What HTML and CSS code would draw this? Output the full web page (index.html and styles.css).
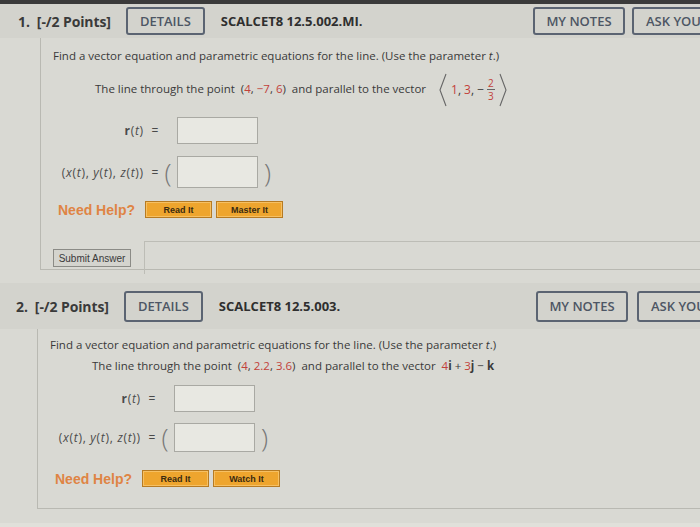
FILE: index.html
```html
<!DOCTYPE html>
<html>
<head>
<meta charset="utf-8">
<link rel="stylesheet" href="styles.css">
</head>
<body>
<div class="topbar"></div>

<div class="qhead q1">
  <div class="qleft">
    <span class="qnum">1.&nbsp; [-/2 Points]</span>
    <span class="obtn details">DETAILS</span>
    <span class="qcode">SCALCET8 12.5.002.MI.</span>
  </div>
  <span class="obtn notes">MY NOTES</span>
  <span class="obtn ask">ASK YOUR TEACHER</span>
</div>

<div class="panel p1">
  <p class="prompt">Find a vector equation and parametric equations for the line. (Use the parameter <i>t</i>.)</p>
  <p class="given">The line through the point&nbsp; (<span class="red">4</span>, <span class="red">&minus;7</span>, <span class="red">6</span>)&nbsp; and parallel to the vector <span class="vec"><svg class="ang" width="10" height="34" viewBox="0 0 10 34"><polyline points="8,1 2,17 8,33" fill="none" stroke="#666" stroke-width="1.1"/></svg><span class="red">1</span>,&nbsp;<span class="red">3</span>,&nbsp;&minus;<span class="frac"><span class="red num">2</span><span class="red den">3</span></span><svg class="ang" width="10" height="34" viewBox="0 0 10 34"><polyline points="2,1 8,17 2,33" fill="none" stroke="#666" stroke-width="1.1"/></svg></span></p>
  <div class="ans r1">
    <span class="lab"><b>r</b>(<i>t</i>)&nbsp; =</span>
    <span class="paren"></span>
    <span class="box"></span>
  </div>
  <div class="ans r2">
    <span class="lab">(<i>x</i>(<i>t</i>), <i>y</i>(<i>t</i>), <i>z</i>(<i>t</i>))&nbsp; =</span>
    <span class="paren">(</span>
    <span class="box"></span>
    <span class="paren close">)</span>
  </div>
  <div class="help">
    <span class="need">Need Help?</span>
    <span class="hbtn">Read It</span>
    <span class="hbtn">Master It</span>
  </div>
  <div class="submitrow">
    <span class="submit">Submit Answer</span>
    <div class="feedback"></div>
  </div>
</div>

<div class="qhead q2">
  <div class="qleft">
    <span class="qnum">2.&nbsp; [-/2 Points]</span>
    <span class="obtn details">DETAILS</span>
    <span class="qcode">SCALCET8 12.5.003.</span>
  </div>
  <span class="obtn notes">MY NOTES</span>
  <span class="obtn ask">ASK YOUR TEACHER</span>
</div>

<div class="panel p2">
  <p class="prompt">Find a vector equation and parametric equations for the line. (Use the parameter <i>t</i>.)</p>
  <p class="given g2">The line through the point&nbsp; (<span class="red">4</span>, <span class="red">2.2</span>, <span class="red">3.6</span>)&nbsp; and parallel to the vector&nbsp; <span class="red">4</span><b>i</b> + <span class="red">3</span><b>j</b> &minus; <b>k</b></p>
  <div class="ans r1">
    <span class="lab"><b>r</b>(<i>t</i>)&nbsp; =</span>
    <span class="paren"></span>
    <span class="box"></span>
  </div>
  <div class="ans r2">
    <span class="lab">(<i>x</i>(<i>t</i>), <i>y</i>(<i>t</i>), <i>z</i>(<i>t</i>))&nbsp; =</span>
    <span class="paren">(</span>
    <span class="box"></span>
    <span class="paren close">)</span>
  </div>
  <div class="help">
    <span class="need">Need Help?</span>
    <span class="hbtn">Read It</span>
    <span class="hbtn">Watch It</span>
  </div>
</div>
<div class="bottom"></div>
</body>
</html>
```

FILE: styles.css
```css
html, body {
  margin: 0;
  padding: 0;
}
body {
  width: 700px;
  height: 527px;
  overflow: hidden;
  background: #d9d9d3;
  font-family: "Open Sans", "DejaVu Sans", sans-serif;
  color: #3d3d3d;
}
.topbar {
  height: 4px;
  background: #3a3a3a;
}
.qhead {
  display: flex;
  align-items: center;
  width: 820px;
  background: #d3d3cd;
  box-sizing: border-box;
}
.q1 {
  height: 34px;
  padding-left: 18px;
}
.q2 {
  height: 46px;
  margin-top: 13px;
  padding-left: 16px;
}
.qleft {
  display: flex;
  align-items: center;
  flex: 0 0 515px;
}
.q2 .qleft {
  flex-basis: 520px;
}
.qnum {
  font-size: 14px;
  font-weight: 700;
  color: #3a3a3a;
  letter-spacing: -0.1px;
}
.qcode {
  font-size: 13px;
  font-weight: 700;
  color: #2f2f2f;
  margin-left: 16px;
}
.obtn {
  display: inline-flex;
  align-items: center;
  justify-content: center;
  box-sizing: border-box;
  height: 28px;
  border: 2px solid #5b6472;
  border-radius: 3px;
  font-size: 13px;
  font-weight: 600;
  color: #4d5664;
}
.details {
  width: 79px;
  margin-left: 15px;
}
.q2 .obtn {
  height: 31px;
}
.notes {
  width: 92px;
}
.ask {
  width: 160px;
  margin-left: 7px;
  justify-content: flex-start;
  padding-left: 12px;
}
.q2 .ask {
  margin-left: 9px;
}
.panel {
  margin-left: 40px;
  border-left: 1px solid #b9b9b2;
  border-bottom: 1px solid #b9b9b2;
  padding-left: 12px;
  box-sizing: border-box;
}
.p1 {
  height: 232px;
  padding-top: 10px;
}
.p2 {
  margin-left: 37px;
  height: 180px;
  padding-top: 8px;
}
.prompt {
  margin: 0;
  font-size: 11.5px;
  line-height: 16px;
  color: #3a3a3a;
  white-space: nowrap;
}
.given {
  margin: 7px 0 0 0;
  padding-left: 42px;
  font-size: 11.5px;
  line-height: 36px;
  height: 36px;
  color: #3a3a3a;
  white-space: nowrap;
}
.g2 {
  height: 16px;
  line-height: 16px;
  margin-top: 5px;
}
.red {
  color: #c2413a;
}
.vec {
  display: inline-flex;
  align-items: center;
  vertical-align: middle;
  margin-left: 6px;
  line-height: 16px;
  font-size: 12px;
}
.ang {
  display: block;
  margin: 0 3px;
}
.frac {
  display: inline-flex;
  flex-direction: column;
  align-items: center;
  font-size: 10px;
  line-height: 12px;
  margin-left: 3px;
}
.frac .num {
  border-bottom: 1px solid #666;
  padding: 0 1px;
}
.ans {
  display: flex;
  align-items: center;
}
.lab {
  width: 106px;
  text-align: right;
  font-size: 12px;
  letter-spacing: 0.7px;
  color: #4a4a4a;
  white-space: nowrap;
}
.lab b {
  font-weight: 700;
}
.paren {
  display: inline-block;
  width: 18px;
  font-size: 26px;
  font-weight: 300;
  line-height: 30px;
  color: #777;
  text-align: center;
}
.close {
  width: auto;
  margin-left: 6px;
}
.box {
  display: block;
  width: 81px;
  height: 27px;
  box-sizing: border-box;
  background: #e8e8e2;
  border: 1px solid #a9a9a3;
}
.p1 .r1 {
  margin-top: 10px;
}
.p1 .r2 {
  margin-top: 12px;
}
.r2 .box {
  height: 32px;
}
.p2 .r1 {
  margin-top: 11px;
}
.p2 .r2 {
  margin-top: 10px;
}
.p2 .r2 .box {
  height: 29px;
}
.help {
  display: flex;
  align-items: center;
  margin-top: 13px;
  padding-left: 5px;
}
.p2 .help {
  margin-top: 18px;
}
.need {
  font-family: "Liberation Sans", Arial, sans-serif;
  font-weight: 700;
  font-size: 14px;
  color: #df8444;
  margin-right: 10px;
}
.hbtn {
  display: inline-flex;
  align-items: center;
  justify-content: center;
  box-sizing: border-box;
  width: 67px;
  height: 17px;
  margin-right: 4px;
  background: #eea52e;
  border: 1px solid #b77b22;
  box-shadow: inset 0 0 0 1px #f6c063;
  font-family: "Liberation Sans", Arial, sans-serif;
  font-weight: 700;
  font-size: 9px;
  color: #3a2a10;
}
.submitrow {
  display: flex;
  margin-top: 23px;
}
.submit {
  display: inline-flex;
  align-items: center;
  justify-content: center;
  box-sizing: border-box;
  width: 78px;
  height: 18px;
  margin-top: 8px;
  background: #d4d4ce;
  border: 1px solid #8b8b86;
  font-family: "Liberation Sans", Arial, sans-serif;
  font-size: 10px;
  color: #3a3a3a;
}
.feedback {
  flex: 1;
  height: 32px;
  margin-left: 13px;
  border-top: 1px solid #bdbdb6;
  border-left: 1px solid #bdbdb6;
}
.bottom {
  height: 20px;
  margin-top: 14px;
  background: #e0e0da;
}
```
